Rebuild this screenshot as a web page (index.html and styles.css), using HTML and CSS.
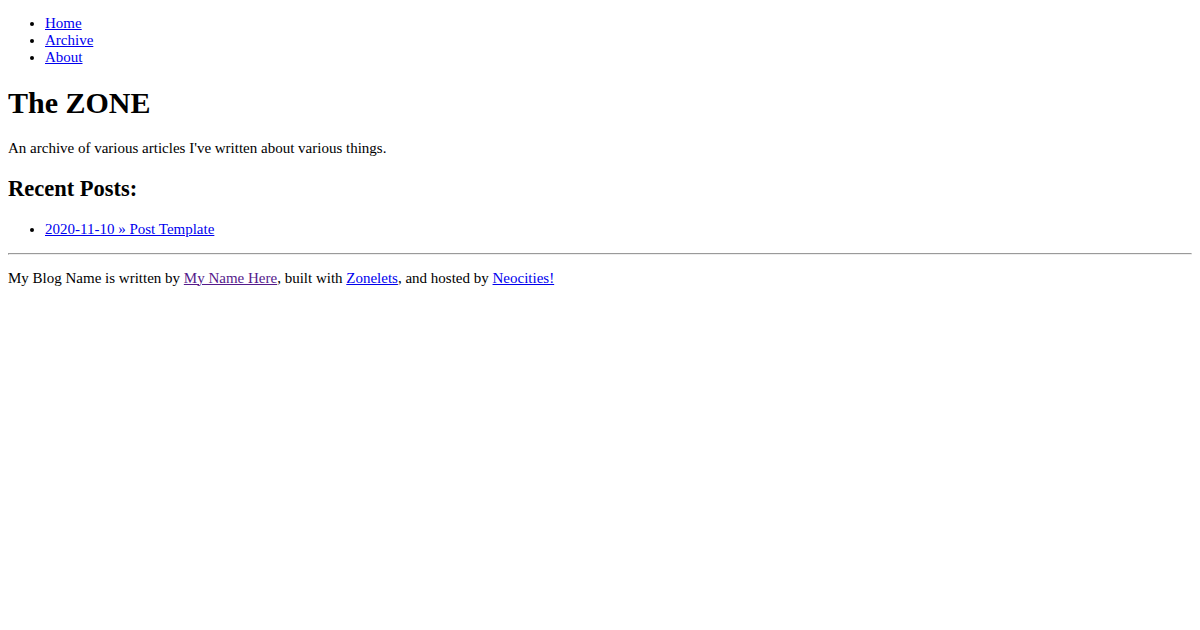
FILE: index.html
```html
<!DOCTYPE html>
<html lang="en">
<head>
    <meta charset="UTF-8">
    <meta name="viewport" content="width=device-width, initial-scale=1.0">
    <title>The ZONE</title>
    <link rel="stylesheet" href="styles.css">
</head>
<body>
    <div id="header">
        <ul class="nav">
            <li><a href="#">Home</a></li>
            <li><a href="#">Archive</a></li>
            <li><a href="#">About</a></li>
        </ul>
    </div>

    <div id="content">
        <h1>The ZONE</h1>
        <p>An archive of various articles I've written about various things.</p>

        <h2>Recent Posts:</h2>
        <ul>
            <li><a href="#">2020-11-10 &raquo; Post Template</a></li>
        </ul>
    </div>

    <div id="footer">
        <hr>
        <p>My Blog Name is written by <a href="#" class="visited">My Name Here</a>, built with <a href="#">Zonelets</a>, and hosted by <a href="#">Neocities!</a></p>
    </div>
</body>
</html>
```

FILE: styles.css
```css
body {
    margin: 0 8px 8px 8px;
    font-family: "Liberation Serif", "Times New Roman", serif;
    font-size: 15px;
    background-color: #ffffff;
    color: #000000;
}

ul {
    padding-left: 37px;
}

.nav {
    margin-top: 15px;
}

a {
    color: #0000ee;
}

a.visited {
    color: #551a8b;
}
```
